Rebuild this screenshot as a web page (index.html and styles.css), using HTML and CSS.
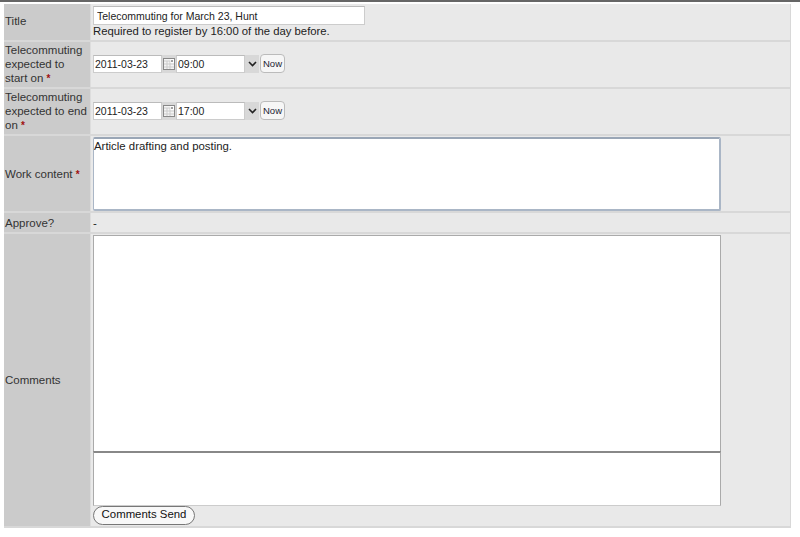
FILE: index.html
```html
<!DOCTYPE html>
<html lang="en">
<head>
  <meta charset="UTF-8">
  <title>Telecommuting</title>
  <link rel="stylesheet" href="styles.css">
</head>
<body>
  <table class="form-table">
    <tr class="row-title">
      <th>Title</th>
      <td>
        <input class="title-input" type="text" value="Telecommuting for March 23, Hunt">
        <div class="hint">Required to register by 16:00 of the day before.</div>
      </td>
    </tr>
    <tr class="row-date">
      <th>Telecommuting expected to start on <span class="req">*</span></th>
      <td>
        <div class="date-line">
          <input class="date-input" type="text" value="2011-03-23">
          <span class="cal-btn">
            <svg width="14" height="14" viewBox="0 0 14 14"><rect x="1.500" y="1.500" width="11" height="11" fill="#f4f4f4" stroke="#888"/><path d="M2 4h10M5 4v8M8 4v8M2 7h10M2 10h10" stroke="#ccc" fill="none"/><rect x="8.500" y="2" width="3.500" height="4" fill="#fff"/><path d="M10 3v2" stroke="#444"/></svg>
          </span>
          <input class="time-input" type="text" value="09:00">
          <span class="drop-btn">
            <svg width="9" height="6" viewBox="0 0 9 6"><path d="M1 1l3.500 3.500L8 1" stroke="#222" stroke-width="1.600" fill="none"/></svg>
          </span>
          <button class="now-btn" type="button">Now</button>
        </div>
      </td>
    </tr>
    <tr class="row-date">
      <th>Telecommuting expected to end on <span class="req">*</span></th>
      <td>
        <div class="date-line">
          <input class="date-input" type="text" value="2011-03-23">
          <span class="cal-btn">
            <svg width="14" height="14" viewBox="0 0 14 14"><rect x="1.500" y="1.500" width="11" height="11" fill="#f4f4f4" stroke="#888"/><path d="M2 4h10M5 4v8M8 4v8M2 7h10M2 10h10" stroke="#ccc" fill="none"/><rect x="8.500" y="2" width="3.500" height="4" fill="#fff"/><path d="M10 3v2" stroke="#444"/></svg>
          </span>
          <input class="time-input" type="text" value="17:00">
          <span class="drop-btn">
            <svg width="9" height="6" viewBox="0 0 9 6"><path d="M1 1l3.500 3.500L8 1" stroke="#222" stroke-width="1.600" fill="none"/></svg>
          </span>
          <button class="now-btn" type="button">Now</button>
        </div>
      </td>
    </tr>
    <tr class="row-work">
      <th>Work content <span class="req">*</span></th>
      <td><div class="work-box">Article drafting and posting.</div></td>
    </tr>
    <tr class="row-approve">
      <th>Approve?</th>
      <td>-</td>
    </tr>
    <tr class="row-comments">
      <th>Comments</th>
      <td>
        <div class="comment-log"></div>
        <div class="comment-new"></div>
        <button class="send-btn" type="button">Comments Send</button>
      </td>
    </tr>
  </table>
</body>
</html>
```

FILE: styles.css
```css
html, body {
  margin: 0;
  padding: 0;
}

body {
  height: 537px;
  overflow: hidden;
  background-color: #fff;
  border-top: 2px solid #666;
  box-sizing: border-box;
  font-family: "Liberation Sans", Arial, sans-serif;
  font-size: 11.500px;
  color: #222;
}

.form-table {
  width: 787px;
  margin: 2px 0 0 4px;
  border-collapse: collapse;
  table-layout: fixed;
}

.form-table th,
.form-table td {
  padding: 0;
  border-bottom: 2px solid #d8d8d8;
  background-color: #e9e9e9;
  line-height: 14px;
  font-size: 11.500px;
  font-weight: normal;
  text-align: left;
}

.form-table th {
  width: 85px;
  padding-left: 1px;
  background-color: #cbcbcb;
  border-right: 1px solid #ddd;
  color: #333;
}

.form-table td {
  padding-left: 2px;
  border-right: 1px solid #d8d8d8;
}

.req {
  color: #a01010;
  font-weight: bold;
  font-size: 10px;
}

.row-title td {
  height: 36px;
  vertical-align: top;
}
.row-title th { padding-bottom: 2px; }
.row-date th,
.row-date td { height: 45px; }
.row-work td { height: 75px; }
.row-work th { padding-top: 2px; }
.row-approve th,
.row-approve td { height: 19px; }
.row-comments td { height: 292px; }

.row-date td { vertical-align: top; }

input {
  margin: 0;
  box-sizing: border-box;
  background-color: #fff;
  font-family: "Liberation Sans", Arial, sans-serif;
  font-size: 10.500px;
  color: #222;
  border: 1px solid #ccc;
  border-top-color: #bbb;
}

.title-input {
  display: block;
  width: 272px;
  height: 19px;
  margin-top: 2px;
  padding: 0 3px;
}

.hint {
  color: #222;
  margin-top: 0;
  font-size: 11.300px;
  line-height: 12px;
}

.date-line {
  display: flex;
  align-items: center;
  margin-top: 12px;
  height: 19px;
}

.date-input,
.time-input {
  width: 69px;
  height: 18px;
  padding: 0 1px;
}

.cal-btn,
.drop-btn {
  display: flex;
  align-items: center;
  justify-content: center;
  width: 14px;
  height: 18px;
  background-color: #d8d8d8;
  flex: none;
}

.drop-btn { margin-right: 1px; }

.now-btn {
  width: 25px;
  height: 19px;
  padding: 0;
  background-color: #f6f6f6;
  border: 1px solid #bbb;
  border-radius: 4px;
  font-family: "Liberation Sans", Arial, sans-serif;
  font-size: 9.500px;
  color: #223;
}

.work-box {
  box-sizing: border-box;
  width: 628px;
  height: 74px;
  padding: 1px 0 0;
  background-color: #fff;
  border: 2px solid #aab6c6;
  border-top-color: #9aa6b6;
  border-left-width: 1px;
  border-radius: 2px;
  font-size: 11.400px;
  line-height: 13px;
  color: #222;
}

.comment-log {
  box-sizing: border-box;
  width: 628px;
  height: 216px;
  background-color: #fff;
  border: 1px solid #aaa;
  border-bottom: 0;
}

.comment-new {
  box-sizing: border-box;
  width: 628px;
  height: 55px;
  background-color: #fff;
  border: 1px solid #aaa;
  border-top: 2px solid #888;
  border-bottom-color: #ccc;
}

.send-btn {
  display: block;
  width: 102px;
  height: 19px;
  margin-top: 0;
  padding: 0 0 3px;
  background-color: #f8f8f8;
  border: 1px solid #777;
  border-radius: 10px;
  font-family: "Liberation Sans", Arial, sans-serif;
  font-size: 11.400px;
  color: #111;
}
```
